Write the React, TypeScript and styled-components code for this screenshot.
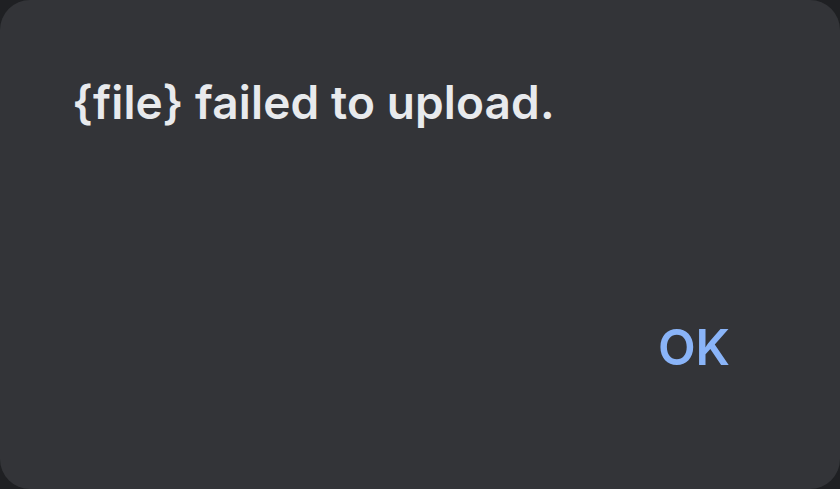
import styled, { createGlobalStyle } from "styled-components";

const Global = createGlobalStyle`
  html, body {
    margin: 0;
    padding: 0;
    background: #1f2023;
  }
  #root {
    width: 840px;
    height: 489px;
  }
`;

const App = () => {
  return (
    <>
      <Global />
      <Dialog>
        <Message>{"{file} failed to upload."}</Message>
        <Actions>
          <OkButton>OK</OkButton>
        </Actions>
      </Dialog>
    </>
  );
};

const Dialog = styled.div`
  box-sizing: border-box;
  width: 840px;
  height: 489px;
  background-color: #333438;
  border-radius: 30px;
  padding: 74px 86px 101px 72px;
  display: flex;
  flex-direction: column;
  justify-content: space-between;
  font-family: Inter, "Noto Sans", sans-serif;
`;

const Message = styled.h2`
  margin: 0;
  font-size: 46px;
  font-weight: 600;
  line-height: 56px;
  letter-spacing: 0.12px;
  color: #e8eaed;
`;

const Actions = styled.div`
  display: flex;
  justify-content: flex-end;
`;

const OkButton = styled.button`
  background: none;
  border: none;
  padding: 12px 24px;
  font-family: Inter, "Noto Sans", sans-serif;
  font-size: 49px;
  font-weight: 600;
  line-height: 56px;
  color: #8ab4f8;
  cursor: pointer;
`;

export default App;
